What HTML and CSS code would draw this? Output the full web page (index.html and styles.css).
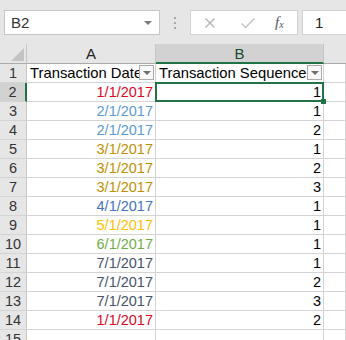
FILE: index.html
```html
<!DOCTYPE html>
<html>
<head>
<meta charset="utf-8">
<link rel="stylesheet" href="styles.css">
</head>
<body>
<div class="toolbar">
  <div class="namebox"><span class="nb-text">B2</span><span class="nb-arrow"></span></div>
  <div class="sep"><span></span><span></span><span></span></div>
  <div class="fxgroup">
    <svg class="ico x" width="12" height="12" viewBox="0 0 12 12"><path d="M1.5 1.5 L10.5 10.5 M10.5 1.5 L1.5 10.5" stroke="#b3b3b3" stroke-width="1.4" fill="none"/></svg>
    <svg class="ico check" width="16" height="12" viewBox="0 0 16 12"><path d="M1.5 6.5 L5.5 10.5 L14.5 1.5" stroke="#c4c4c4" stroke-width="1.5" fill="none"/></svg>
    <span class="fx">f<sub>x</sub></span>
  </div>
  <div class="formula">1</div>
</div>
<div class="sheet">
  <div class="corner"><span class="tri"></span></div>
  <div class="colhead">A</div>
  <div class="colhead sel">B</div>
  <div class="colhead last"></div>

  <div class="rowhead">1</div>
  <div class="cell hdr">Transaction Date<span class="filter"></span></div>
  <div class="cell hdr">Transaction Sequence<span class="filter"></span></div>
  <div class="cell"></div>

  <div class="rowhead sel">2</div>
  <div class="cell num red">1/1/2017</div>
  <div class="cell num active">1<span class="handle"></span></div>
  <div class="cell"></div>

  <div class="rowhead">3</div>
  <div class="cell num lblue">2/1/2017</div>
  <div class="cell num">1</div>
  <div class="cell"></div>

  <div class="rowhead">4</div>
  <div class="cell num lblue">2/1/2017</div>
  <div class="cell num">2</div>
  <div class="cell"></div>

  <div class="rowhead">5</div>
  <div class="cell num gold">3/1/2017</div>
  <div class="cell num">1</div>
  <div class="cell"></div>

  <div class="rowhead">6</div>
  <div class="cell num gold">3/1/2017</div>
  <div class="cell num">2</div>
  <div class="cell"></div>

  <div class="rowhead">7</div>
  <div class="cell num gold">3/1/2017</div>
  <div class="cell num">3</div>
  <div class="cell"></div>

  <div class="rowhead">8</div>
  <div class="cell num blue">4/1/2017</div>
  <div class="cell num">1</div>
  <div class="cell"></div>

  <div class="rowhead">9</div>
  <div class="cell num yellow">5/1/2017</div>
  <div class="cell num">1</div>
  <div class="cell"></div>

  <div class="rowhead">10</div>
  <div class="cell num green">6/1/2017</div>
  <div class="cell num">1</div>
  <div class="cell"></div>

  <div class="rowhead">11</div>
  <div class="cell num slate">7/1/2017</div>
  <div class="cell num">1</div>
  <div class="cell"></div>

  <div class="rowhead">12</div>
  <div class="cell num slate">7/1/2017</div>
  <div class="cell num">2</div>
  <div class="cell"></div>

  <div class="rowhead">13</div>
  <div class="cell num slate">7/1/2017</div>
  <div class="cell num">3</div>
  <div class="cell"></div>

  <div class="rowhead">14</div>
  <div class="cell num red">1/1/2017</div>
  <div class="cell num">2</div>
  <div class="cell"></div>

  <div class="rowhead">15</div>
  <div class="cell"></div>
  <div class="cell"></div>
  <div class="cell"></div>
</div>
</body>
</html>
```
FILE: styles.css
```css
* { box-sizing: border-box; }
html, body { margin: 0; padding: 0; }
body {
  width: 346px;
  height: 340px;
  overflow: hidden;
  background: #ffffff;
  font-family: "Liberation Sans", Arial, sans-serif;
  color: #000;
}
.toolbar {
  height: 44px;
  background: #e6e6e6;
  display: flex;
  align-items: flex-start;
  padding: 10px 0 0 4px;
}
.namebox {
  width: 156px;
  height: 25px;
  background: #fff;
  border: 1px solid #c6c6c6;
  display: flex;
  align-items: center;
  justify-content: space-between;
  padding: 0 7px 0 6px;
}
.nb-text { font-size: 15px; color: #333; }
.nb-arrow {
  width: 0; height: 0;
  border-left: 4px solid transparent;
  border-right: 4px solid transparent;
  border-top: 4px solid #7a7a7a;
}
.sep {
  width: 30px;
  height: 25px;
  display: flex;
  flex-direction: column;
  align-items: center;
  justify-content: center;
  gap: 3px;
}
.sep span { width: 2px; height: 2px; background: #a8a8a8; }
.fxgroup {
  width: 108px;
  height: 25px;
  background: #fff;
  border: 1px solid #d2d2d2;
  display: flex;
  align-items: center;
  padding-left: 13px;
}
.ico.x { margin-right: 24px; }
.ico.check { margin-right: 19px; }
.fx {
  font-family: "Liberation Serif", "Times New Roman", serif;
  font-style: italic;
  font-size: 15px;
  color: #555;
}
.fx sub { font-size: 10px; vertical-align: -1px; }
.formula {
  flex: 1;
  margin-left: 4px;
  margin-right: -2px;
  height: 25px;
  background: #fff;
  border: 1px solid #d2d2d2;
  font-size: 15px;
  color: #222;
  line-height: 23px;
  padding-left: 12px;
}
.sheet {
  display: grid;
  grid-template-columns: 27px 129px 168px 22px;
  grid-template-rows: 20px;
  grid-auto-rows: 19px;
  font-size: 14.5px;
}
.corner {
  background: #e6e6e6;
  border-right: 1px solid #c6c6c6;
  border-bottom: 1px solid #ababab;
  position: relative;
}
.tri {
  position: absolute;
  right: 2px;
  bottom: 2px;
  width: 0; height: 0;
  border-left: 13px solid transparent;
  border-bottom: 13px solid #c3c3c3;
}
.colhead {
  background: #e6e6e6;
  border-right: 1px solid #c6c6c6;
  border-bottom: 1px solid #ababab;
  text-align: center;
  font-size: 15px;
  line-height: 20px;
  color: #222;
}
.colhead.sel {
  background: #d2d2d2;
  border-bottom: 2px solid #217346;
  color: #1d4a30;
}
.colhead.last { border-right: none; }
.rowhead {
  background: #e6e6e6;
  border-right: 1px solid #c6c6c6;
  border-bottom: 1px solid #d4d4d4;
  text-align: center;
  line-height: 19px;
  color: #333;
  font-size: 14.5px;
}
.rowhead.sel {
  background: #d2d2d2;
  border-right: 2px solid #217346;
}
.cell {
  border-right: 1px solid #d4d4d4;
  border-bottom: 1px solid #d4d4d4;
  line-height: 19px;
  white-space: nowrap;
  overflow: hidden;
  position: relative;
  padding: 0 2px 0 3px;
}
.cell.hdr { font-size: 14.8px; }
.cell.num { text-align: right; }
.cell.active { overflow: visible; z-index: 2; padding-right: 2px; }
.cell.active::after {
  content: "";
  position: absolute;
  top: -1px; left: -1px; right: -1px; bottom: -1px;
  border: 2px solid #217346;
}
.handle {
  position: absolute;
  right: -3px;
  bottom: -3px;
  width: 5px;
  height: 5px;
  background: #217346;
  z-index: 3;
}
.filter {
  position: absolute;
  right: 1px;
  top: 1px;
  width: 15px;
  height: 15px;
  background: #f8f8f8;
  border: 1px solid #ababab;
}
.filter::after {
  content: "";
  position: absolute;
  left: 3px;
  top: 5px;
  border-left: 4px solid transparent;
  border-right: 4px solid transparent;
  border-top: 4px solid #6e6e6e;
}
.red { color: #d8081f; }
.lblue { color: #5b9bd5; }
.gold { color: #bf9000; }
.blue { color: #4472c4; }
.yellow { color: #ffc000; }
.green { color: #70ad47; }
.slate { color: #44546a; }
```
